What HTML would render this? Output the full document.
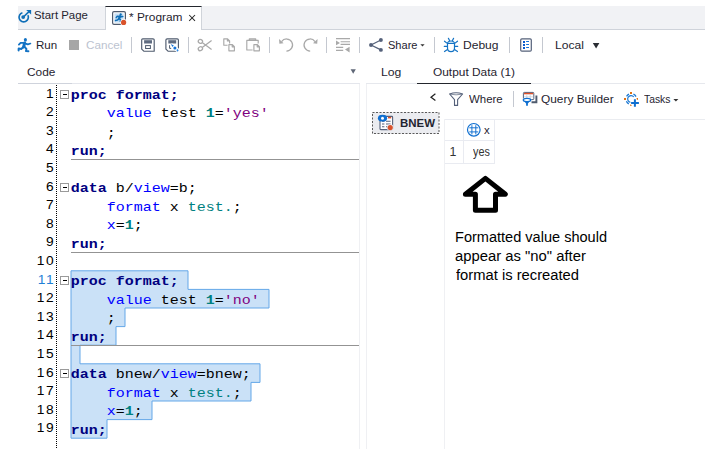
<!DOCTYPE html>
<html><head><meta charset="utf-8">
<style>
html,body{margin:0;padding:0;background:#fff;}
body{width:705px;height:471px;position:relative;overflow:hidden;font-family:"Liberation Sans",sans-serif;font-size:12px;color:#1a1a1a;}
.a{position:absolute;}
.t{position:absolute;white-space:nowrap;line-height:20px;height:20px;transform-origin:0 50%;}
.vsep{position:absolute;width:1px;background:#c4c8d0;}
/* code */
#code{position:absolute;left:70.7px;top:86.85px;font-family:"Liberation Mono",monospace;font-size:15px;line-height:23.25px;white-space:pre;color:#000;transform:scaleY(0.8);transform-origin:0 0;}
#code div{height:23.25px;}
.k{color:#000080;font-weight:bold;}
.b{color:#0000ff;}
.n{color:#008080;font-weight:bold;}
.f{color:#008080;}
.s{color:#800080;}
.ln{position:absolute;left:20.6px;width:34px;text-align:right;font-size:12.5px;line-height:18.6px;height:18.6px;color:#000;letter-spacing:1.3px;transform:scaleX(1.1);transform-origin:100% 50%;margin-top:-0.2px;}
.fold{position:absolute;left:60px;width:7px;height:7px;border:1px solid #9a9a9a;background:#fff;}
.fold:after{content:"";position:absolute;left:1.5px;top:3px;width:4px;height:1px;background:#000;}
.hr{position:absolute;left:71px;width:288px;height:1px;background:#939393;}
.sel{position:absolute;background:#c6def6;}
</style></head><body>

<!-- tab bar -->
<div class="a" style="left:18px;top:6px;width:687px;height:23px;background:#f1f2f5;border-bottom:1px solid #cfd3da;"></div>
<div class="a" style="left:105px;top:6px;width:95px;height:23px;background:#fff;border-left:1px solid #d0d4da;border-right:1px solid #d0d4da;border-top:1px solid #23262d;box-sizing:content-box;width:94.5px;"></div>

<!-- Start page icon -->

<!-- program tab -->

<!-- toolbar -->
<div class="a" style="left:69px;top:40px;width:10px;height:10px;background:#a6a6a6;"></div>
<div class="vsep" style="left:131px;top:37px;height:16px;"></div>
<!-- save icons -->
<div class="vsep" style="left:188px;top:37px;height:16px;"></div>
<!-- scissors -->
<!-- copy -->
<!-- paste -->
<div class="vsep" style="left:269px;top:37px;height:16px;"></div>
<!-- undo / redo -->
<div class="vsep" style="left:326px;top:37px;height:16px;"></div>
<!-- indent -->
<div class="vsep" style="left:359px;top:37px;height:16px;"></div>
<!-- share -->
<div class="vsep" style="left:434px;top:37px;height:16px;"></div>
<!-- debug -->
<div class="vsep" style="left:509px;top:37px;height:16px;"></div>
<div class="vsep" style="left:542px;top:37px;height:16px;"></div>

<!-- Code header -->
<div class="a" style="left:18px;top:83px;width:342px;height:1px;background:#e4e6ec;"></div>
<div class="a" style="left:18px;top:83px;width:54px;height:1px;background:#cfd3dc;"></div>
<div class="a" style="left:366px;top:83px;width:339px;height:1px;background:#e6e8ed;"></div>
<div class="a" style="left:417px;top:82.6px;width:114px;height:1.4px;background:#23262d;"></div>

<!-- panel lines -->
<div class="a" style="left:359px;top:84px;width:1px;height:365px;background:#eff0f3;"></div>
<div class="a" style="left:366px;top:84px;width:1px;height:365px;background:#eff0f3;"></div>
<div class="a" style="left:444px;top:119px;width:1px;height:330px;background:#eff0f3;"></div>


<!-- right panel toolbar -->
<div class="vsep" style="left:513px;top:91px;height:16px;"></div>

<!-- BNEW -->
<div class="a" style="left:372px;top:112px;width:67px;height:22px;background:#ebecf0;"></div>
<svg class="a" style="left:0;top:0" width="705" height="471"><rect x="372.5" y="112.5" width="66.5" height="21" fill="none" stroke="#5a5a5a" stroke-width="1" stroke-dasharray="2 1.5"/></svg>

<!-- table -->
<div class="a" style="left:445px;top:119px;width:260px;height:1px;background:#eaecf0;"></div>
<div class="a" style="left:445px;top:119px;width:50px;height:1px;background:#e9ebf1;"></div>
<div class="a" style="left:445px;top:140px;width:50px;height:1px;background:#e9ebf1;"></div>
<div class="a" style="left:445px;top:163px;width:50px;height:1px;background:#e9ebf1;"></div>
<div class="a" style="left:463px;top:119px;width:1px;height:45px;background:#e9ebf1;"></div>
<div class="a" style="left:494px;top:119px;width:1px;height:45px;background:#e9ebf1;"></div>

<!-- arrow -->

<!-- note -->


<svg class="a" style="left:0;top:0" width="705" height="471" viewBox="0 0 705 471">
<!-- start page -->
<g fill="none" stroke="#0f6fb8" stroke-width="1.6"><path d="M22.4 12.75 A4.65 4.65 0 1 0 27.9 15.2"/><path d="M23.4 17 L29 11.6"/></g>
<circle cx="23.2" cy="17.1" r="1.9" fill="#0f6fb8"/><path d="M26.2 9.9 H31.1 V14.4 Z" fill="#0f6fb8"/>
<!-- program tab icon -->
<rect x="112.6" y="11.6" width="12.8" height="12.8" rx="1.4" fill="#fff" stroke="#4f5b6e" stroke-width="1.2"/>
<rect x="114.4" y="13.4" width="9.2" height="9.2" fill="#c6dff5"/>
<g fill="none" stroke="#0f6fb8" stroke-linecap="round" stroke-linejoin="round"><path d="M120.1 16.2 L119 18.4" stroke-width="2.2"/><path d="M119.8 16.5 L117.2 16.3 L116.2 17.6 M120.2 16.9 L122.8 16.6 M118.9 18.6 L117.4 20.1 L115.5 20.5 M119.2 18.6 L120.6 19.6 L120.3 21.3" stroke-width="1.5"/></g>
<ellipse cx="120.7" cy="14.5" rx="1.1" ry="1.2" fill="#0f6fb8"/>
<circle cx="123.6" cy="22.4" r="3.3" fill="#fff"/><circle cx="123.6" cy="22.4" r="2.6" fill="#d9532c"/>
<!-- tab close -->
<path d="M189.2 15 L195 20.8 M195 15 L189.2 20.8" stroke="#2a2a2a" stroke-width="1.05" fill="none"/>
<!-- run -->
<ellipse cx="25.4" cy="39.8" rx="1.55" ry="1.9" fill="#1473c4"/>
<g fill="none" stroke="#1473c4" stroke-linecap="round" stroke-linejoin="round"><path d="M24.6 43 L23.6 47" stroke-width="3"/><path d="M23.4 42.8 L20.6 42.9 L18.9 44.6" stroke-width="1.8"/><path d="M25 43.4 L27.8 44.4 L30.4 43.5" stroke-width="1.7"/><path d="M23.4 47 L21.2 49 L18.7 48.4 L18.6 50.4" stroke-width="2"/><path d="M24.4 46.6 L26.4 48.8 L26 51.1 L28.4 51.2" stroke-width="2"/></g>
<!-- save -->
<g fill="#fff" stroke="#4f5b6e" stroke-width="1.15" stroke-linejoin="round"><path d="M143 38.8 H153 Q154.2 38.8 154.2 39.8 V51.2 H143.8 L141.7 49.1 V39.8 Q141.7 38.8 142.7 38.8 Z"/><path d="M167.2 38.8 H177.2 Q178.4 38.8 178.4 40 V51.2 H168 L165.9 49.1 V40 Q165.9 38.8 167.2 38.8 Z"/></g>
<rect x="144.1" y="40.2" width="7.9" height="3.3" fill="#5f6b80"/><rect x="145.6" y="45.6" width="4.8" height="2.9" fill="#fff" stroke="#4f5b6e" stroke-width="1"/>
<rect x="168.3" y="40.2" width="7.9" height="3.3" fill="#5f6b80"/><path d="M169.6 45.2 V48.4 H171.2" fill="none" stroke="#4f5b6e" stroke-width="1"/>
<path d="M172.2 45.6 L179.4 51.8" stroke="#fff" stroke-width="4" stroke-linecap="round"/>
<path d="M170.8 44 L173.8 45.6 L172.5 47 Z" fill="#1473d8"/><circle cx="174.9" cy="48" r="1.55" fill="#1473d8"/><path d="M176.4 50 L177.8 49 L178.6 50.8 L177.4 51.8 Z" fill="#2f8ae6"/>
<!-- scissors -->
<g fill="none" stroke="#a9a9a9" stroke-width="1.25"><ellipse cx="200.4" cy="41.4" rx="2.2" ry="1.9" transform="rotate(25 200.4 41.4)"/><ellipse cx="200.4" cy="48.7" rx="2.2" ry="1.9" transform="rotate(-25 200.4 48.7)"/><path d="M202.2 42.6 L211.6 49.6 M202.2 47.6 L211.6 40.4"/></g>
<!-- copy -->
<g fill="none" stroke="#a9a9a9" stroke-width="1.15" stroke-linejoin="round"><path d="M227.6 45.2 H223.8 V38.8 H227.6 L229.6 40.8 V43.6 M227.4 38.8 V41 H229.6"/><path d="M228.9 44.6 H232.4 L234.4 46.6 V50.8 H228.9 Z M232.2 44.6 V46.8 H234.4" fill="#fff"/></g>
<!-- paste -->
<g fill="none" stroke="#a9a9a9" stroke-width="1.15" stroke-linejoin="round"><path d="M252.6 50 H246.8 V40.4 H258.2 V43.4"/><path d="M249.4 40.2 V39 H255.6 V40.2" stroke-width="1.4"/><path d="M253.9 44.6 H257.4 L259.4 46.6 V50.8 H253.9 Z M257.2 44.6 V46.8 H259.4" fill="#fff"/></g>
<!-- undo redo -->
<g fill="none" stroke="#a9a9a9" stroke-width="1.25"><path d="M281.6 41.6 A6 6 0 1 1 286.4 51"/><path d="M315 41.6 A6 6 0 1 0 310.2 51"/></g>
<path d="M279 39 L279.4 43.8 L283.6 43.2 Z" fill="#a9a9a9"/><path d="M317.6 39 L317.2 43.8 L313 43.2 Z" fill="#a9a9a9"/>
<!-- indent -->
<g fill="none" stroke="#a9a9a9" stroke-width="1.15"><path d="M336 38.6 H350 M340.6 41.7 H350 M340.6 44.4 H350 M336 47.4 H343.2 M336 50.4 H343.2"/></g>
<path d="M336 40.6 L340 42.9 L336 45.2 Z M349.6 46.8 L345 49.6 L349.6 52.4 Z" fill="#a9a9a9"/>
<!-- share -->
<path d="M380.9 40 L371 45 L380.9 49.9" fill="none" stroke="#55617a" stroke-width="1.2"/><g fill="#55617a"><circle cx="371" cy="45" r="1.95"/><circle cx="380.9" cy="40" r="1.95"/><circle cx="380.9" cy="49.9" r="1.95"/></g>
<path d="M420.4 44.2 H424.6 L422.5 46.6 Z" fill="#333"/>
<!-- debug -->
<g fill="none" stroke="#1473c4" stroke-width="1.2" stroke-linecap="round"><path d="M447.5 44 Q447.5 41 451 41 Q454.5 41 454.5 44 V48 Q454.5 51.6 451 51.6 Q447.5 51.6 447.5 48 Z"/><path d="M447.6 43.4 H454.4 M449.6 40.6 L448.4 38.3 M452.4 40.6 L453.6 38.3 M447.3 43.4 L444.5 41.2 M454.7 43.4 L457.5 41.2 M444.3 46.4 H447.3 M454.7 46.4 H457.7 M447.5 49.4 L444.5 51.5 M454.5 49.4 L457.5 51.5"/></g>
<!-- list icon -->
<rect x="520.7" y="38.9" width="10.6" height="12.3" rx="1.2" fill="#fff" stroke="#55617a" stroke-width="1.2"/>
<g fill="#0a5cd0"><rect x="523" y="41" width="2" height="2"/><rect x="523" y="44" width="2" height="2"/><rect x="523" y="47" width="2" height="2"/></g>
<path d="M526.1 41.5 H529 M526.1 44.5 H529 M526.1 47.5 H529" stroke="#1473d8" stroke-width="1"/>
<!-- local caret -->
<path d="M592.8 43 H599.4 L596.1 48.4 Z" fill="#2a2d33"/>
<!-- code caret -->
<path d="M350.6 69.2 H355.8 L353.2 73.8 Z" fill="#5f6777"/>
<!-- back chevron -->
<path d="M435.4 93.8 L431 97.2 L435.4 100.6" fill="none" stroke="#222" stroke-width="1.25"/>
<!-- funnel -->
<path d="M449.6 94 Q456 91.6 462.6 94 L457.6 99.6 V105.4 H454.5 V99.6 Z" fill="#fff" stroke="#55617a" stroke-width="1.1" stroke-linejoin="round"/><path d="M449.8 94.2 Q456 95.4 462.4 94.2" fill="none" stroke="#55617a" stroke-width="0.7"/>
<!-- query builder -->
<path d="M536.4 95.4 V102.2 H531.4" fill="none" stroke="#4f5b6e" stroke-width="1.9"/>
<rect x="523.4" y="92.4" width="10.4" height="7.2" rx="0.8" fill="#fff" stroke="#55617a" stroke-width="1"/>
<rect x="524" y="92.9" width="9.2" height="1.4" fill="#e0522a"/>
<path d="M526.8 94.6 V99 M530.2 94.6 V99 M524 96.8 H533.2" stroke="#c4cbd8" stroke-width="0.7"/>
<rect x="521.6" y="98.4" width="9.6" height="8" fill="#fff"/>
<path d="M524 101 L526.1 103.4 V105.7 H527.9 V103.4 L530 101 Z" fill="#0f6fd0"/>
<ellipse cx="527" cy="100" rx="3.7" ry="1.6" fill="#fff" stroke="#0f6fd0" stroke-width="1.3"/>
<!-- tasks -->
<g fill="none" stroke="#1a78d2"><path d="M633.8 97 A3.4 3.4 0 1 0 630.6 102.4" stroke-width="1.2"/><path d="M626.6 96.4 A5.2 5.2 0 0 1 629 94.2 M633.4 94.2 A5.2 5.2 0 0 1 636 96.6 M626.4 101.2 A5.2 5.2 0 0 0 628.8 103.8" stroke-width="1.3"/></g>
<g fill="#e0700f"><rect x="630" y="92" width="2" height="2"/><rect x="624" y="98" width="2" height="2"/><rect x="636.4" y="98" width="1.6" height="1.8"/><rect x="630" y="104.4" width="1.6" height="1.4"/></g>
<path d="M634.9 98.6 V107.2 M630.6 102.9 H639.4" stroke="#fff" stroke-width="3.6"/>
<path d="M634.9 99.2 V106.7 M631.1 102.9 H638.9" stroke="#0f6fd0" stroke-width="2"/>
<path d="M673.4 99 H678.4 L675.9 101.6 Z" fill="#333"/>
<!-- BNEW icon -->
<rect x="380" y="116.4" width="12.6" height="13.2" rx="0.8" fill="#fff" stroke="#55617a" stroke-width="1.1"/>
<path d="M382 121.2 H384.4 M386 121.2 H390.6 M382 124 H384.4 M386 124 H390.6 M382 126.8 H384.4 M386 126.8 H388" stroke="#55617a" stroke-width="1.1"/>
<rect x="388" y="116.9" width="3.2" height="1.5" fill="#e0522a"/>
<ellipse cx="382.5" cy="118.2" rx="4.6" ry="3.4" fill="#0f6fd0"/><circle cx="382.5" cy="118.2" r="1.5" fill="#fff"/>
<circle cx="390.2" cy="127.6" r="3.3" fill="#ececf1"/><circle cx="390.2" cy="127.6" r="2.6" fill="#d9532c"/>
<!-- column type icon -->
<circle cx="473.8" cy="129.8" r="6.3" fill="#fff" stroke="#0f6fd0" stroke-width="1.2"/>
<path d="M471.9 125.2 V134.4 M475.8 125.2 V134.4 M469.3 127.8 H478.3 M469.3 131.9 H478.3" stroke="#0f6fd0" stroke-width="0.95"/>
<!-- arrow -->
<path d="M485.4 178.4 L505.4 194.3 H495.5 V210.2 H475.4 V194.3 H465.4 Z" fill="#fff" stroke="#000" stroke-width="5" stroke-linejoin="round"/>
</svg>

<!-- gutter dotted -->
<div class="a" style="left:56px;top:85px;width:1px;height:364px;background:repeating-linear-gradient(to bottom,#000 0,#000 1px,#fff 1px,#fff 2px);"></div>

<svg class="a" style="left:0;top:0" width="705" height="471"><path d="M71.0 270.8 L188.0 270.8 L188.0 289.4 L269.0 289.4 L269.0 308.0 L125.0 308.0 L125.0 326.6 L116.0 326.6 L116.0 345.2 L80.0 345.2 L80.0 363.8 L260.0 363.8 L260.0 382.4 L251.0 382.4 L251.0 401.0 L152.0 401.0 L152.0 419.6 L107.0 419.6 L107.0 438.2 L71.0 438.2 Z" fill="#cae1f7" stroke="#64a7e8" stroke-width="1" stroke-linejoin="round"/></svg>
<div class="ln" style="top:84.8px;color:#000">1</div>
<div class="ln" style="top:103.4px;color:#000">2</div>
<div class="ln" style="top:122.0px;color:#000">3</div>
<div class="ln" style="top:140.6px;color:#000">4</div>
<div class="ln" style="top:159.2px;color:#000">5</div>
<div class="ln" style="top:177.8px;color:#000">6</div>
<div class="ln" style="top:196.4px;color:#000">7</div>
<div class="ln" style="top:215.0px;color:#000">8</div>
<div class="ln" style="top:233.6px;color:#000">9</div>
<div class="ln" style="top:252.2px;color:#000">10</div>
<div class="ln" style="top:270.8px;color:#1f7fd6">11</div>
<div class="ln" style="top:289.4px;color:#000">12</div>
<div class="ln" style="top:308.0px;color:#000">13</div>
<div class="ln" style="top:326.6px;color:#000">14</div>
<div class="ln" style="top:345.2px;color:#000">15</div>
<div class="ln" style="top:363.8px;color:#000">16</div>
<div class="ln" style="top:382.4px;color:#000">17</div>
<div class="ln" style="top:401.0px;color:#000">18</div>
<div class="ln" style="top:419.6px;color:#000">19</div>
<div class="fold" style="top:90.3px"></div>
<div class="fold" style="top:183.3px"></div>
<div class="fold" style="top:276.3px"></div>
<div class="fold" style="top:369.3px"></div>
<div class="hr" style="top:159px"></div>
<div class="hr" style="top:252px"></div>
<div class="hr" style="top:345px"></div>
<div class="t" style="left:34.03px;top:5.4px;font-size:11.8px;color:#1f2430;transform:scaleX(0.967);">Start Page</div>
<div class="t" style="left:129.1px;top:6.6px;font-size:11.8px;color:#1f2430;transform:scaleX(1.008);">* Program</div>
<div class="t" style="left:36.02px;top:35.1px;font-size:11.8px;color:#1f2430;transform:scaleX(0.98);">Run</div>
<div class="t" style="left:85.91px;top:35.1px;font-size:11.8px;color:#bcc3d0;transform:scaleX(0.991);">Cancel</div>
<div class="t" style="left:387.56px;top:35.1px;font-size:11.8px;color:#1f2430;transform:scaleX(0.937);">Share</div>
<div class="t" style="left:462.88px;top:35.1px;font-size:11.8px;color:#1f2430;transform:scaleX(1.021);">Debug</div>
<div class="t" style="left:555.27px;top:35.3px;font-size:11.8px;color:#1f2430;transform:scaleX(1.026);">Local</div>
<div class="t" style="left:27.49px;top:61.7px;font-size:11.8px;color:#1f2430;transform:scaleX(1.007);">Code</div>
<div class="t" style="left:380.77px;top:61.9px;font-size:11.8px;color:#1f2430;transform:scaleX(1.033);">Log</div>
<div class="t" style="left:432.59px;top:61.9px;font-size:11.8px;color:#1f2430;transform:scaleX(1.008);">Output Data (1)</div>
<div class="t" style="left:469.1px;top:88.8px;font-size:11.8px;color:#1f2430;transform:scaleX(0.968);">Where</div>
<div class="t" style="left:540.89px;top:88.8px;font-size:11.8px;color:#1f2430;transform:scaleX(1.007);">Query Builder</div>
<div class="t" style="left:644.0px;top:88.8px;font-size:11.8px;color:#1f2430;transform:scaleX(0.877);">Tasks</div>
<div class="t" style="left:400.03px;top:112.9px;font-size:11.8px;color:#1f2430;transform:scaleX(0.971);font-weight:bold;">BNEW</div>
<div class="t" style="left:484.1px;top:120.1px;font-size:11.8px;color:#1f2430;transform:scaleX(0.967);">x</div>
<div class="t" style="left:449.4px;top:141.7px;font-size:12.4px;color:#333;transform:scaleX(1.0);">1</div>
<div class="t" style="left:473.2px;top:141.77px;font-size:12.2px;color:#333;transform:scaleX(0.889);">yes</div>
<div class="t" style="left:454.96px;top:227.47px;font-size:14.0px;color:#000;transform:scaleX(1.039);">Formatted value should</div>
<div class="t" style="left:454.94px;top:246.27px;font-size:14.0px;color:#000;transform:scaleX(1.059);">appear as "no" after</div>
<div class="t" style="left:456.0px;top:265.37px;font-size:14.0px;color:#000;transform:scaleX(1.054);">format is recreated</div>

<div id="code"><div><span class="k">proc format;</span></div><div>    <span class="b">value</span> test <span class="n">1</span>=<span class="s">'yes'</span></div><div>    ;</div><div><span class="k">run;</span></div><div> </div><div><span class="k">data</span> b/<span class="b">view</span>=b;</div><div>    <span class="b">format</span> x <span class="f">test.</span>;</div><div>    <span class="b">x</span>=<span class="n">1</span>;</div><div><span class="k">run;</span></div><div> </div><div><span class="k">proc format;</span></div><div>    <span class="b">value</span> test <span class="n">1</span>=<span class="s">'no'</span></div><div>    ;</div><div><span class="k">run;</span></div><div> </div><div><span class="k">data</span> bnew/<span class="b">view</span>=bnew;</div><div>    <span class="b">format</span> x <span class="f">test.</span>;</div><div>    <span class="b">x</span>=<span class="n">1</span>;</div><div><span class="k">run;</span></div></div>

</body></html>
